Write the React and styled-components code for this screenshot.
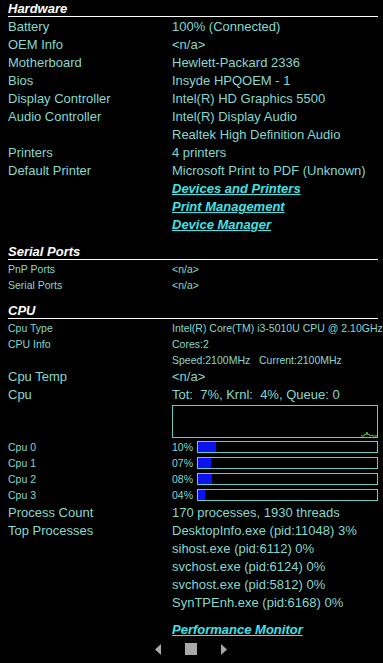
import React from "react";
import styled, { createGlobalStyle } from "styled-components";

const GlobalStyle = createGlobalStyle`
  html, body { margin: 0; padding: 0; background: #000; }
  body { font-family: "Liberation Sans", Arial, sans-serif; }
`;

const TEXT = "#86d8cf";
const LINK = "#42e2e6";
const BORDER = "#6cc9bf";

const Page = styled.div`
  width: 383px;
  height: 663px;
  box-sizing: border-box;
  padding: 0 5px 0 8px;
  background: #000;
  color: ${TEXT};
  overflow: hidden;
`;

const Section = styled.section`
  margin-top: ${(p) => p.$gap || 0}px;
`;

const Header = styled.h2`
  margin: 0 0 1px;
  padding-top: 1px;
  font-size: 13px;
  line-height: 15px;
  font-weight: bold;
  font-style: italic;
  color: #fff;
  border-bottom: 1px solid #fff;
`;

const Row = styled.div`
  display: grid;
  grid-template-columns: 164px 1fr;
  font-size: ${(p) => (p.$small ? "10.5px" : "13px")};
  line-height: ${(p) => (p.$small ? "16px" : "18px")};
  white-space: pre;
  margin-top: ${(p) => p.$mt || 0}px;
`;

const Label = styled.span``;
const Value = styled.span``;

const Link = styled.a`
  color: ${LINK};
  font-weight: bold;
  font-style: italic;
  text-decoration: underline;
  font-size: 13px;
`;

const Graph = styled.div`
  height: 31px;
  margin: 1px 0;
  border: 1px solid ${BORDER};
  display: flex;
  align-items: flex-end;
  justify-content: flex-end;
`;

const BarCell = styled.div`
  display: flex;
  align-items: center;
`;

const Pct = styled.span`
  width: 25px;
`;

const Bar = styled.div`
  flex: 1;
  height: 10px;
  border: 1px solid ${BORDER};
  display: flex;
`;

const Fill = styled.div`
  background: #0a14ee;
  height: 100%;
`;

const Nav = styled.div`
  display: flex;
  justify-content: center;
  align-items: center;
  gap: 24px;
  margin-top: 4px;
  padding-right: 4px;
`;

const Square = styled.div`
  width: 12px;
  height: 12px;
  background: #a9a9a9;
`;

const Arrow = ({ dir }) => (
  <svg width="6" height="11" viewBox="0 0 6 11">
    {dir === "left" ? (
      <polygon points="6,0 6,11 0,5.5" fill="#a9a9a9" />
    ) : (
      <polygon points="0,0 0,11 6,5.5" fill="#a9a9a9" />
    )}
  </svg>
);

const hw = [
  ["Battery", "100% (Connected)"],
  ["OEM Info", "<n/a>"],
  ["Motherboard", "Hewlett-Packard 2336"],
  ["Bios", "Insyde HPQOEM - 1"],
  ["Display Controller", "Intel(R) HD Graphics 5500"],
  ["Audio Controller", "Intel(R) Display Audio"],
  ["", "Realtek High Definition Audio"],
  ["Printers", "4 printers"],
  ["Default Printer", "Microsoft Print to PDF (Unknown)"],
];

const cpus = [
  ["Cpu 0", 10],
  ["Cpu 1", 7],
  ["Cpu 2", 8],
  ["Cpu 3", 4],
];

const procs = [
  "DesktopInfo.exe (pid:11048) 3%",
  "sihost.exe (pid:6112) 0%",
  "svchost.exe (pid:6124) 0%",
  "svchost.exe (pid:5812) 0%",
  "SynTPEnh.exe (pid:6168) 0%",
];

export default function App() {
  return (
    <>
      <GlobalStyle />
      <Page>
        <Section>
          <Header>Hardware</Header>
          {hw.map(([l, v], i) => (
            <Row key={i}>
              <Label>{l}</Label>
              <Value>{v}</Value>
            </Row>
          ))}
          {["Devices and Printers", "Print Management", "Device Manager"].map((t) => (
            <Row key={t}>
              <Label />
              <Value>
                <Link>{t}</Link>
              </Value>
            </Row>
          ))}
        </Section>

        <Section $gap={9}>
          <Header>Serial Ports</Header>
          <Row $small>
            <Label>PnP Ports</Label>
            <Value>{"<n/a>"}</Value>
          </Row>
          <Row $small>
            <Label>Serial Ports</Label>
            <Value>{"<n/a>"}</Value>
          </Row>
        </Section>

        <Section $gap={9}>
          <Header>CPU</Header>
          <Row $small>
            <Label>Cpu Type</Label>
            <Value>Intel(R) Core(TM) i3-5010U CPU @ 2.10GHz</Value>
          </Row>
          <Row $small>
            <Label>CPU Info</Label>
            <Value>Cores:2</Value>
          </Row>
          <Row $small>
            <Label />
            <Value>{"Speed:2100MHz   Current:2100MHz"}</Value>
          </Row>
          <Row>
            <Label>Cpu Temp</Label>
            <Value>{"<n/a>"}</Value>
          </Row>
          <Row>
            <Label>Cpu</Label>
            <Value>{"Tot:  7%, Krnl:  4%, Queue: 0"}</Value>
          </Row>
          <Row>
            <Label />
            <Graph>
              <svg width="16" height="6" viewBox="0 0 16 6">
                <polyline
                  points="0,5 3,5 4,3 5,4 6,1 7,4 8,3 9,5 11,4 12,5 16,5"
                  fill="none"
                  stroke="#4ec83a"
                  strokeWidth="1"
                />
              </svg>
            </Graph>
          </Row>
          {cpus.map(([l, p]) => (
            <Row $small key={l}>
              <Label>{l}</Label>
              <BarCell>
                <Pct>{String(p).padStart(2, "0")}%</Pct>
                <Bar>
                  <Fill style={{ width: `${p}%` }} />
                </Bar>
              </BarCell>
            </Row>
          ))}
          <Row $mt={1}>
            <Label>Process Count</Label>
            <Value>170 processes, 1930 threads</Value>
          </Row>
          {procs.map((p, i) => (
            <Row key={i}>
              <Label>{i === 0 ? "Top Processes" : ""}</Label>
              <Value>{p}</Value>
            </Row>
          ))}
          <Row $mt={9}>
            <Label />
            <Value>
              <Link>Performance Monitor</Link>
            </Value>
          </Row>
        </Section>

        <Nav>
          <Arrow dir="left" />
          <Square />
          <Arrow dir="right" />
        </Nav>
      </Page>
    </>
  );
}
